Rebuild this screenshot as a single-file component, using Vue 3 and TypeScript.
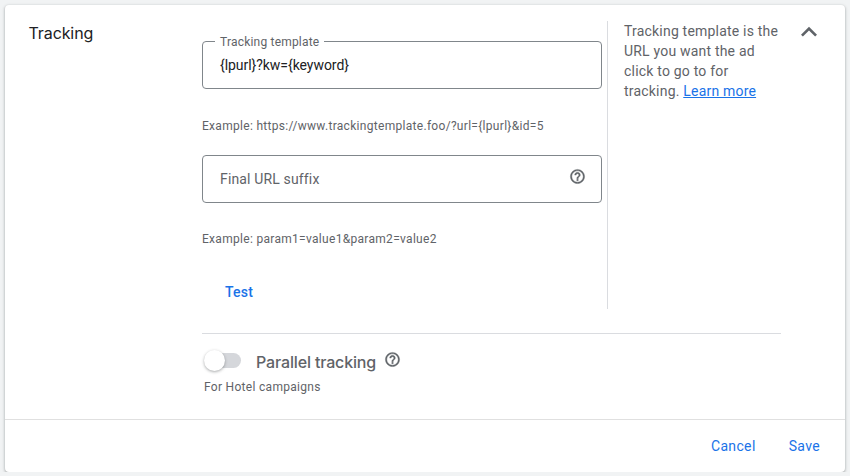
<script setup lang="ts">
const helpLines = 'Tracking template is the URL you want the ad click to go to for tracking.'
</script>

<template>
  <main class="card">
    <section class="body">
      <h2 class="title">Tracking</h2>
      <div class="content">
        <div class="top">
          <div class="fields">
            <div class="field">
              <span class="float">Tracking template</span>
              <span class="value">{lpurl}?kw={keyword}</span>
            </div>
            <p class="hint first">Example: https://www.trackingtemplate.foo/?url={lpurl}&amp;id=5</p>
            <div class="field second">
              <span class="placeholder">Final URL suffix</span>
              <svg class="help" viewBox="0 0 24 24" width="17" height="17">
                <path fill="#5f6368" stroke="#5f6368" stroke-width=".5" d="M11 18h2v-2h-2v2zm1-16C6.48 2 2 6.48 2 12s4.48 10 10 10 10-4.48 10-10S17.52 2 12 2zm0 18c-4.41 0-8-3.59-8-8s3.59-8 8-8 8 3.59 8 8-3.59 8-8 8zm0-14c-2.21 0-4 1.79-4 4h2c0-1.1.9-2 2-2s2 .9 2 2c0 2-3 1.75-3 5h2c0-2.25 3-2.5 3-5 0-2.21-1.79-4-4-4z"/>
              </svg>
            </div>
            <p class="hint second-hint">Example: param1=value1&amp;param2=value2</p>
            <a class="test">Test</a>
          </div>
          <aside class="side">
            <p class="side-text">{{ helpLines }} <a class="learn">Learn more</a></p>
          </aside>
        </div>
        <div class="parallel">
          <div class="parallel-row">
            <span class="switch"><span class="knob"></span></span>
            <span class="parallel-label">Parallel tracking</span>
            <svg class="parallel-help" viewBox="0 0 24 24" width="17" height="17">
              <path fill="#5f6368" stroke="#5f6368" stroke-width=".5" d="M11 18h2v-2h-2v2zm1-16C6.48 2 2 6.48 2 12s4.48 10 10 10 10-4.48 10-10S17.52 2 12 2zm0 18c-4.41 0-8-3.59-8-8s3.59-8 8-8 8 3.59 8 8-3.59 8-8 8zm0-14c-2.21 0-4 1.79-4 4h2c0-1.1.9-2 2-2s2 .9 2 2c0 2-3 1.75-3 5h2c0-2.25 3-2.5 3-5 0-2.21-1.79-4-4-4z"/>
            </svg>
          </div>
          <p class="parallel-sub">For Hotel campaigns</p>
        </div>
      </div>
      <svg class="chevron" viewBox="0 0 24 24" width="32" height="32">
        <path fill="#5f6368" d="M12 8l-6 6 1.41 1.41L12 10.83l4.59 4.58L18 14z"/>
      </svg>
    </section>
    <footer class="footer">
      <a class="action">Cancel</a>
      <a class="action">Save</a>
    </footer>
  </main>
</template>

<style>
html, body { margin: 0; background: #f1f3f4; }
</style>

<style scoped>
.card {
  box-sizing: border-box;
  width: 840px;
  height: 467px;
  margin: 5px 5px 0;
  background: #fff;
  border-radius: 4px;
  box-shadow: 0 1px 2px rgba(60, 64, 67, .3), 0 1px 3px 1px rgba(60, 64, 67, .15);
  font-family: Roboto, sans-serif;
  display: flex;
  flex-direction: column;
}
.body {
  flex: 1;
  display: flex;
  align-items: flex-start;
  border-bottom: 1px solid #e0e0e0;
  position: relative;
}
.title {
  width: 197px;
  box-sizing: border-box;
  margin: 0;
  padding: 18px 0 0 23.5px;
  font: 400 16px/20px Inter, Roboto, sans-serif;
  letter-spacing: -.1px;
  color: #202124;
}
.content { width: 579px; padding-top: 16px; }
.top { display: flex; }
.fields {
  width: 405px;
  padding: 20px 5px 0 0;
  height: 268px;
  border-right: 1px solid #dadce0;
  box-sizing: content-box;
}
.field {
  box-sizing: border-box;
  width: 400px;
  height: 48px;
  border: 1px solid #80868b;
  border-radius: 4px;
  position: relative;
  display: flex;
  align-items: center;
  padding: 0 16px 0 17px;
}
.float {
  position: absolute;
  left: 12px;
  top: -8px;
  padding: 0 5px;
  background: #fff;
  font-size: 12px;
  line-height: 16px;
  letter-spacing: .2px;
  color: #5f6368;
}
.value { font-size: 14px; line-height: 20px; color: #202124; letter-spacing: -.05px; }
.placeholder { font-size: 14px; color: #5f6368; letter-spacing: .15px; }
.help { margin-left: auto; margin-top: -5px; margin-right: -1px; }
.hint {
  margin: 0;
  font-size: 12px;
  line-height: 16px;
  letter-spacing: .3px;
  color: #5f6368;
}
.first { margin-top: 29px; }
.second { margin-top: 21px; }
.second-hint { margin-top: 28px; }
.test {
  display: block;
  margin: 35px 0 0 23px;
  font-size: 14px;
  line-height: 20px;
  font-weight: 500;
  letter-spacing: .2px;
  color: #1a73e8;
}
.side { padding: 0 0 0 16px; width: 160px; }
.side-text {
  margin: 0;
  font-size: 14px;
  line-height: 20px;
  letter-spacing: .2px;
  color: #5f6368;
}
.learn { color: #1a73e8; text-decoration: underline; }
.parallel {
  margin-top: 24px;
  border-top: 1px solid #dadce0;
  padding-top: 16px;
}
.parallel-row { display: flex; align-items: center; height: 20px; }
.switch {
  width: 36px;
  height: 15px;
  margin-left: 3px;
  margin-right: 15px;
  border-radius: 8px;
  background: #d5d7db;
  position: relative;
}
.knob {
  position: absolute;
  left: -1px;
  top: -3px;
  width: 21px;
  height: 21px;
  border-radius: 50%;
  background: #fff;
  box-shadow: 0 1px 3px rgba(60, 64, 67, .45);
}
.parallel-label {
  font: 500 16px/20px Inter, Roboto, sans-serif;
  color: #5f6368;
  letter-spacing: -.15px;
  padding-top: 4px;
}
.parallel-help { margin-left: 8px; margin-top: -2px; }
.parallel-sub {
  margin: 9px 0 0 2px;
  font-size: 12px;
  line-height: 16px;
  letter-spacing: .3px;
  color: #5f6368;
}
.chevron { position: absolute; top: 11px; left: 788px; }
.footer {
  height: 52px;
  display: flex;
  align-items: center;
  justify-content: flex-end;
  gap: 33px;
  padding: 0 25px 0 0;
}
.action {
  font-size: 14px;
  font-weight: 400;
  letter-spacing: .35px;
  color: #1a73e8;
}
</style>
